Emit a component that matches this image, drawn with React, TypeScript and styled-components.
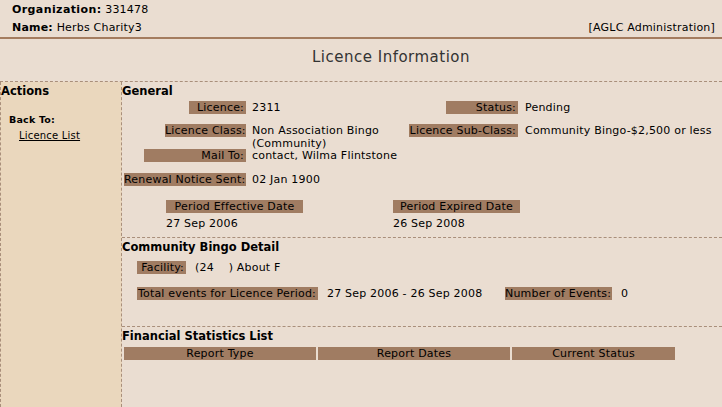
import React from 'react'
import styled, { createGlobalStyle } from 'styled-components'

const GlobalStyle = createGlobalStyle`
  html, body {
    margin: 0;
    padding: 0;
  }
  body {
    background: #eaddd1;
    font-family: 'DejaVu Sans', Verdana, sans-serif;
    font-size: 11px;
    letter-spacing: 0.2px;
    color: #000;
  }
`

const BROWN = '#a07c62'
const DASH = '1px dashed #a98f7b'

export default function App() {
  return (
    <Page>
      <GlobalStyle />
      <Header>
        <HeaderRow>
          <span>
            <OrgLabel>Organization:</OrgLabel> 331478
          </span>
        </HeaderRow>
        <HeaderRow>
          <span>
            <b>Name:</b> Herbs Charity3
          </span>
          <span>[AGLC Administration]</span>
        </HeaderRow>
      </Header>
      <Title>Licence Information</Title>
      <Body>
        <Sidebar>
          <Heading>Actions</Heading>
          <BackTo>Back To:</BackTo>
          <NavLink href="#">Licence List</NavLink>
        </Sidebar>
        <Main>
          <Section padBottom={7} bordered>
            <Heading>General</Heading>
            <FieldGrid>
              <LabelCell>
                <Tag width={57}>Licence:</Tag>
              </LabelCell>
              <Value>2311</Value>
              <LabelCell>
                <Tag width={72}>Status:</Tag>
              </LabelCell>
              <Value wide>Pending</Value>

              <LabelCell>
                <Tag width={81}>Licence Class:</Tag>
              </LabelCell>
              <Value>Non Association Bingo (Community)</Value>
              <LabelCell>
                <Tag width={109}>Licence Sub-Class:</Tag>
              </LabelCell>
              <Value wide>Community Bingo-$2,500 or less</Value>

              <LabelCell>
                <Tag width={102}>Mail To:</Tag>
              </LabelCell>
              <Value>contact, Wilma Flintstone</Value>
              <span />
              <span />

              <LabelCell>
                <Tag width={122}>Renewal Notice Sent:</Tag>
              </LabelCell>
              <Value>02 Jan 1900</Value>
            </FieldGrid>
            <DateGrid>
              <DateHead width={137}>Period Effective Date</DateHead>
              <DateHead width={127}>Period Expired Date</DateHead>
              <DateValue>27 Sep 2006</DateValue>
              <DateValue>26 Sep 2008</DateValue>
            </DateGrid>
          </Section>

          <Section padBottom={26} bordered>
            <Heading>Community Bingo Detail</Heading>
            <DetailRow>
              <Tag width={49}>Facility:</Tag>
              <DetailValue>(24    ) About F</DetailValue>
            </DetailRow>
            <DetailRow>
              <Tag width={181}>Total events for Licence Period:</Tag>
              <DetailValue width={187}>27 Sep 2006 - 26 Sep 2008</DetailValue>
              <Tag width={107}>Number of Events:</Tag>
              <DetailValue>0</DetailValue>
            </DetailRow>
          </Section>

          <Section padBottom={0}>
            <Heading>Financial Statistics List</Heading>
            <ListHead>
              <ListHeadCell>Report Type</ListHeadCell>
              <ListHeadCell>Report Dates</ListHeadCell>
              <ListHeadCell>Current Status</ListHeadCell>
            </ListHead>
          </Section>
        </Main>
      </Body>
    </Page>
  )
}

const Page = styled.div`
  display: flex;
  flex-direction: column;
  min-height: 100vh;
`

const Header = styled.div`
  padding: 2px 7px 1px 12px;
  border-bottom: 2px solid #a47c5f;
`

const HeaderRow = styled.div`
  display: flex;
  justify-content: space-between;
  line-height: 16px;

  & + & {
    margin-top: 2px;
  }
`

const OrgLabel = styled.b`
  letter-spacing: 0.4px;
`

const Title = styled.div`
  padding: 9px 0 15px 60px;
  text-align: center;
  font-size: 15px;
  letter-spacing: 0.5px;
  line-height: 18px;
  color: #333;
  border-bottom: ${DASH};
`

const Body = styled.div`
  display: flex;
  flex: 1;
`

const Sidebar = styled.div`
  width: 122px;
  flex-shrink: 0;
  box-sizing: border-box;
  padding-top: 2px;
  background: #ead7bd;
  border-left: ${DASH};
  border-right: ${DASH};
`

const Main = styled.div`
  flex: 1;
`

const Heading = styled.h2`
  margin: 0;
  font-size: 11.5px;
  font-weight: bold;
  letter-spacing: 0;
  line-height: 14px;
`

const BackTo = styled.div`
  margin-top: 14px;
  padding-left: 8px;
  font-size: 9.5px;
  font-weight: bold;
  line-height: 16px;
`

const NavLink = styled.a`
  display: inline-block;
  margin-left: 18px;
  font-size: 10px;
  line-height: 16px;
  color: #000;
  text-decoration: underline;
`

const Section = styled.div<{ padBottom: number; bordered?: boolean }>`
  padding-top: 2px;
  padding-bottom: ${props => props.padBottom}px;
  border-bottom: ${props => (props.bordered ? DASH : 'none')};
`

const FieldGrid = styled.div`
  display: grid;
  grid-template-columns: 126px 157px 115px 1fr;
  grid-template-rows: 23px 25px 24px 13px;
  margin-top: 3px;
  line-height: 13px;
`

const LabelCell = styled.div`
  text-align: right;
  padding-right: 2px;
`

const Tag = styled.span<{ width: number }>`
  display: inline-block;
  flex-shrink: 0;
  box-sizing: border-box;
  width: ${props => props.width}px;
  height: 13px;
  padding-right: 2px;
  background: ${BROWN};
  line-height: 13px;
  text-align: right;
  white-space: nowrap;
`

const Value = styled.div<{ wide?: boolean }>`
  padding-left: ${props => (props.wide ? 5 : 4)}px;
`

const DateGrid = styled.div`
  display: grid;
  grid-template-columns: 227px 1fr;
  row-gap: 4px;
  margin-top: 14px;
  padding-left: 44px;
  line-height: 13px;
`

const DateHead = styled.div<{ width: number }>`
  width: ${props => props.width}px;
  background: ${BROWN};
  text-align: center;
`

const DateValue = styled.div``

const DetailRow = styled.div`
  display: flex;
  align-items: flex-start;
  margin-top: 7px;
  padding-left: 15px;
  line-height: 13px;

  & + & {
    margin-top: 13px;
  }
`

const DetailValue = styled.span<{ width?: number }>`
  box-sizing: border-box;
  width: ${props => (props.width ? `${props.width}px` : 'auto')};
  padding-left: 9px;
  white-space: pre;
`

const ListHead = styled.div`
  display: grid;
  grid-template-columns: 192px 192px 163px;
  column-gap: 2px;
  margin: 4px 0 0 2px;
`

const ListHeadCell = styled.div`
  background: ${BROWN};
  line-height: 13px;
  text-align: center;
`
